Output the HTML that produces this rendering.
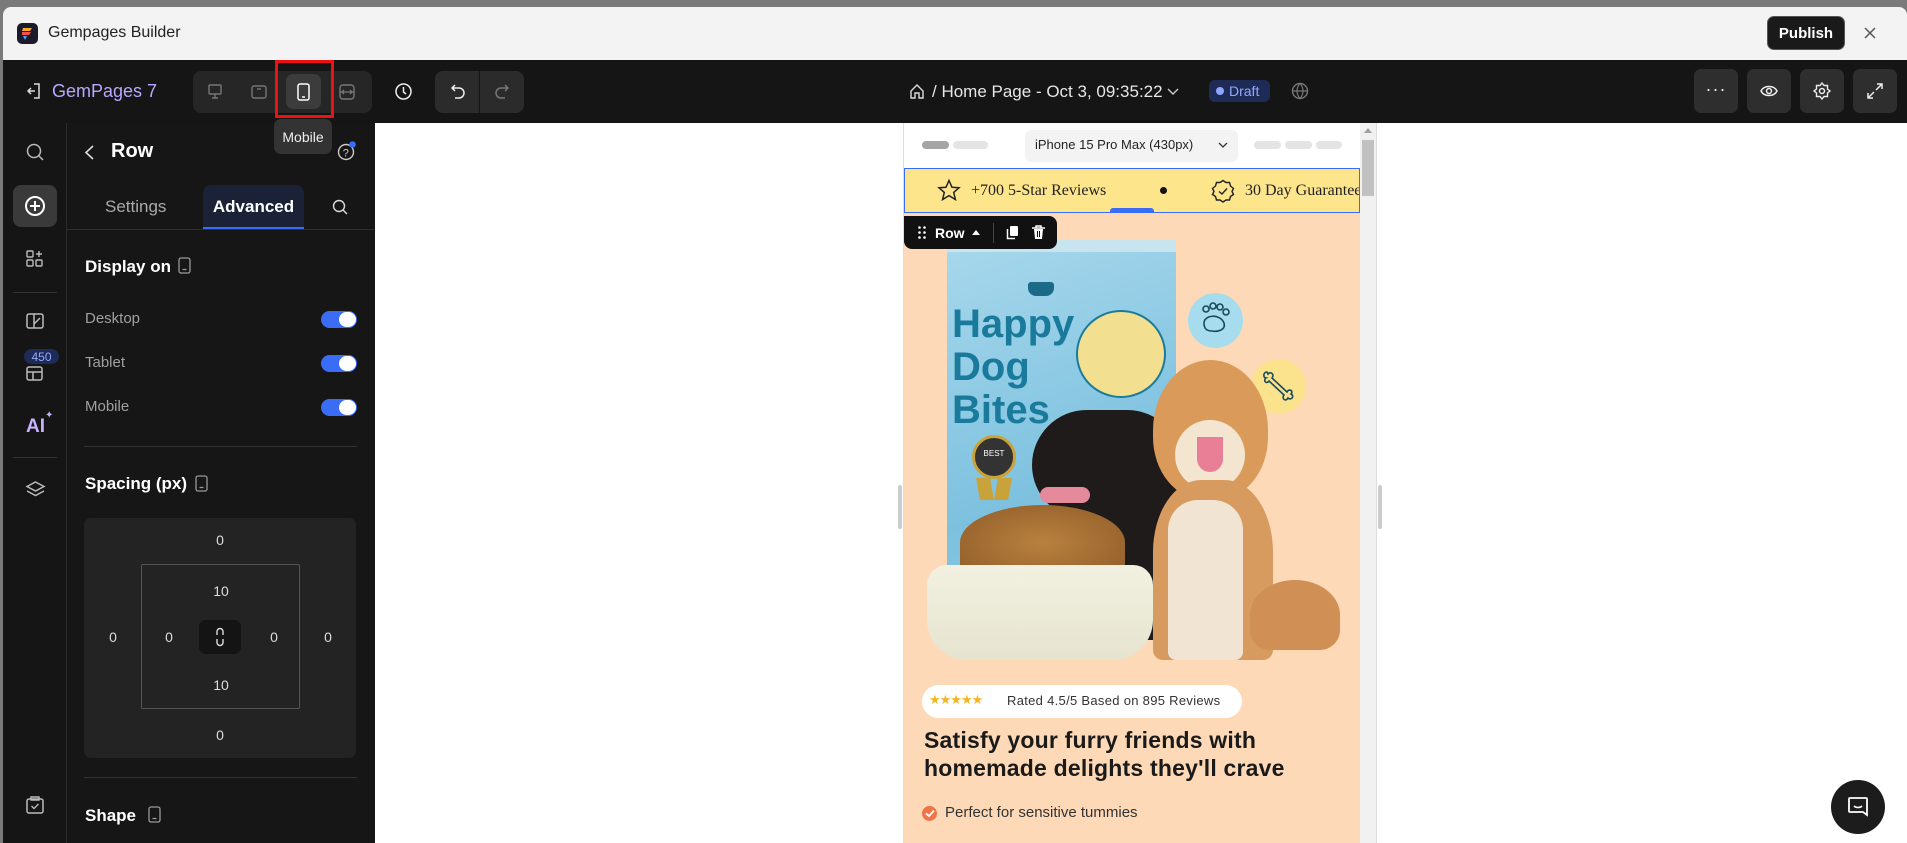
<!DOCTYPE html>
<html><head><meta charset="utf-8"><style>
*{box-sizing:border-box;margin:0;padding:0}
body{width:1907px;height:843px;overflow:hidden;background:#7a7a7a;font-family:"Liberation Sans",sans-serif;position:relative}
.a{position:absolute}
.t{position:absolute;white-space:nowrap}
svg{position:absolute;overflow:visible}
</style></head><body>
<!-- title bar -->
<div class="a" style="left:3px;top:7px;width:1904px;height:53px;background:#f3f3f3;border-radius:8px 8px 0 0"></div>
<div class="a" style="left:17px;top:23px;width:21px;height:21px;border-radius:5px;background:#1b1b2b"></div>
<svg style="left:17px;top:23px" width="21" height="21"><path d="M6 5 L15 5 L13 8 L5 8Z" fill="#f9a825"/><path d="M5 9 L14 9 L12 12 L5 12Z" fill="#ef5350"/><path d="M6 13 L10 13 L8 17Z" fill="#42a5f5"/></svg>
<div class="t" style="left:48px;top:24px;font-size:16px;color:#222">Gempages Builder</div>
<div class="a" style="left:1767px;top:16px;width:78px;height:34px;border-radius:7px;background:#1a1a1a;border:1px solid #555"></div>
<div class="t" style="left:1767px;top:25px;width:78px;text-align:center;font-size:15px;font-weight:bold;color:#fff">Publish</div>
<svg style="left:1864px;top:27px" width="12" height="12"><path d="M1 1L11 11M11 1L1 11" stroke="#555" stroke-width="1.5"/></svg>
<!-- top toolbar -->
<div class="a" style="left:3px;top:60px;width:1904px;height:63px;background:#151515"></div>
<svg style="left:27px;top:83px" width="14" height="16"><path d="M7 1H12V15H7M1 8H8M4 5L1 8L4 11" stroke="#ddd" stroke-width="1.5" fill="none"/></svg>
<div class="t" style="left:52px;top:81px;font-size:18px;color:#b9a7ff">GemPages 7</div>
<div class="a" style="left:193px;top:71px;width:179px;height:42px;border-radius:8px;background:#262626"></div>
<svg style="left:207px;top:84px" width="16" height="16"><rect x="2" y="1" width="12" height="9" rx="1" stroke="#777" fill="none" stroke-width="1.4"/><path d="M8 10V14M5 14H11" stroke="#777" stroke-width="1.4"/></svg>
<svg style="left:251px;top:84px" width="16" height="16"><rect x="1" y="2" width="14" height="12" rx="2" stroke="#777" fill="none" stroke-width="1.4"/><path d="M6 5H10" stroke="#777" stroke-width="1.4"/></svg>
<div class="a" style="left:286px;top:74px;width:35px;height:35px;border-radius:7px;background:#3c3c3c"></div>
<svg style="left:296px;top:83px" width="16" height="18"><rect x="2" y="1" width="11" height="16" rx="2" stroke="#fff" fill="none" stroke-width="1.5"/><path d="M6 14H9" stroke="#fff" stroke-width="1.5"/></svg>
<svg style="left:339px;top:84px" width="16" height="16"><rect x="1" y="1" width="14" height="14" rx="3" stroke="#777" fill="none" stroke-width="1.4"/><path d="M1 8H15M5 6L3 8L5 10M11 6L13 8L11 10" stroke="#777" fill="none" stroke-width="1.3"/></svg>
<div class="a" style="left:275px;top:60px;width:59px;height:58px;border:3px solid #ee1111"></div>
<svg style="left:395px;top:83px" width="17" height="17"><circle cx="8.5" cy="8.5" r="7.5" stroke="#eee" fill="none" stroke-width="1.5"/><path d="M8.5 4V9L11 11" stroke="#eee" fill="none" stroke-width="1.5"/></svg>
<div class="a" style="left:435px;top:71px;width:89px;height:42px;border-radius:8px;background:#2b2b2b"></div>
<div class="a" style="left:479px;top:71px;width:1px;height:42px;background:#151515"></div>
<svg style="left:450px;top:83px" width="16" height="17"><path d="M5 2L2 5L5 8M2 5H9A5 5 0 0 1 9 15H5" stroke="#eee" fill="none" stroke-width="1.5"/></svg>
<svg style="left:494px;top:83px" width="16" height="17"><path d="M11 2L14 5L11 8M14 5H7A5 5 0 0 0 7 15H11" stroke="#777" fill="none" stroke-width="1.5"/></svg>
<!-- breadcrumb -->
<svg style="left:909px;top:83px" width="16" height="17"><path d="M2 8L8 2L14 8V15H10V10H6V15H2Z" stroke="#ddd" fill="none" stroke-width="1.4"/></svg>
<div class="t" style="left:932px;top:82px;font-size:17px;color:#e6e6e6">/ Home Page - Oct 3, 09:35:22</div>
<svg style="left:1167px;top:88px" width="12" height="8"><path d="M1 1L6 6L11 1" stroke="#ccc" fill="none" stroke-width="1.4"/></svg>
<div class="a" style="left:1209px;top:80px;width:61px;height:22px;border-radius:6px;background:#1f2b57"></div>
<div class="a" style="left:1216px;top:87px;width:8px;height:8px;border-radius:50%;background:#8ea6ff"></div>
<div class="t" style="left:1229px;top:83px;font-size:14px;color:#93a9ff">Draft</div>
<svg style="left:1291px;top:82px" width="18" height="18"><circle cx="9" cy="9" r="7.5" stroke="#777" fill="none" stroke-width="1.4"/><path d="M1.5 9H16.5M9 1.5C5 6 5 12 9 16.5M9 1.5C13 6 13 12 9 16.5" stroke="#777" fill="none" stroke-width="1.2"/></svg>
<div class="a" style="left:1694px;top:69px;width:44px;height:44px;border-radius:7px;background:#2e2e2e"></div>
<div class="t" style="left:1694px;top:79px;width:44px;text-align:center;font-size:18px;color:#eee;letter-spacing:1px">···</div>
<div class="a" style="left:1747px;top:69px;width:44px;height:44px;border-radius:7px;background:#2e2e2e"></div>
<svg style="left:1760px;top:82px" width="18" height="18"><path d="M1 9C4 3 14 3 17 9C14 15 4 15 1 9Z" stroke="#eee" fill="none" stroke-width="1.5"/><circle cx="9" cy="9" r="2.5" stroke="#eee" fill="none" stroke-width="1.5"/></svg>
<div class="a" style="left:1800px;top:69px;width:44px;height:44px;border-radius:7px;background:#2e2e2e"></div>
<svg style="left:1813px;top:82px" width="18" height="18"><circle cx="9" cy="9" r="2.5" stroke="#eee" fill="none" stroke-width="1.5"/><path d="M9 1L11 3.5L14.5 3.5L14.5 7L17 9L14.5 11L14.5 14.5L11 14.5L9 17L7 14.5L3.5 14.5L3.5 11L1 9L3.5 7L3.5 3.5L7 3.5Z" stroke="#eee" fill="none" stroke-width="1.4"/></svg>
<div class="a" style="left:1853px;top:69px;width:44px;height:44px;border-radius:7px;background:#2e2e2e"></div>
<svg style="left:1867px;top:83px" width="16" height="16"><path d="M10 1H15V6M15 1L9 7M6 15H1V10M1 15L7 9" stroke="#eee" fill="none" stroke-width="1.5"/></svg>
<!-- left rail -->
<div class="a" style="left:3px;top:123px;width:64px;height:720px;background:#151515;border-right:1px solid #2a2a2a"></div>
<svg style="left:26px;top:143px" width="18" height="18"><circle cx="8" cy="8" r="6.5" stroke="#bbb" fill="none" stroke-width="1.5"/><path d="M12.5 12.5L17 17" stroke="#bbb" stroke-width="1.5"/></svg>
<div class="a" style="left:13px;top:185px;width:44px;height:42px;border-radius:8px;background:#3a3a3a"></div>
<svg style="left:24px;top:195px" width="22" height="22"><circle cx="11" cy="11" r="9" stroke="#fff" fill="none" stroke-width="2"/><path d="M11 6V16M6 11H16" stroke="#fff" stroke-width="2"/></svg>
<svg style="left:26px;top:250px" width="18" height="18"><rect x="1" y="1" width="6" height="6" rx="1" stroke="#bbb" fill="none" stroke-width="1.4"/><rect x="1" y="10" width="6" height="6" rx="1" stroke="#bbb" fill="none" stroke-width="1.4"/><rect x="10" y="10" width="6" height="6" rx="1" stroke="#bbb" fill="none" stroke-width="1.4"/><path d="M13 1V7M10 4H16" stroke="#bbb" stroke-width="1.4"/></svg>
<div class="a" style="left:13px;top:292px;width:44px;height:1px;background:#333"></div>
<svg style="left:26px;top:313px" width="19" height="17"><rect x="1" y="1" width="16" height="14" rx="2" stroke="#bbb" fill="none" stroke-width="1.5"/><path d="M8 1V15M8 11L14 5" stroke="#bbb" stroke-width="1.5"/></svg>
<div class="a" style="left:24px;top:349px;width:35px;height:15px;border-radius:8px;background:#1f2b57"></div>
<div class="t" style="left:24px;top:350px;width:35px;text-align:center;font-size:12px;color:#93a9ff">450</div>
<svg style="left:26px;top:366px" width="18" height="16"><rect x="1" y="1" width="15" height="13" rx="2" stroke="#bbb" fill="none" stroke-width="1.5"/><path d="M1 6H16M7 6V14" stroke="#bbb" stroke-width="1.5"/></svg>
<div class="t" style="left:26px;top:416px;font-size:19px;font-weight:bold;color:#c7b2ff">AI</div>
<div class="t" style="left:45px;top:410px;font-size:10px;color:#c7b2ff">✦</div>
<div class="a" style="left:13px;top:457px;width:44px;height:1px;background:#333"></div>
<svg style="left:26px;top:481px" width="19" height="17"><path d="M9.5 1L18 5.5L9.5 10L1 5.5Z M1 10L9.5 14.5L18 10" stroke="#bbb" fill="none" stroke-width="1.5"/></svg>
<svg style="left:26px;top:796px" width="18" height="18"><rect x="1" y="3" width="16" height="14" rx="2" stroke="#bbb" fill="none" stroke-width="1.5"/><path d="M5 1H13V4H5Z M5.5 10L8 12.5L12.5 8" stroke="#bbb" fill="none" stroke-width="1.4"/></svg>
<!-- panel -->
<div class="a" style="left:67px;top:123px;width:308px;height:720px;background:#161616"></div>
<svg style="left:85px;top:145px" width="9" height="15"><path d="M8 1L1 7.5L8 14" stroke="#ddd" fill="none" stroke-width="1.6"/></svg>
<div class="t" style="left:111px;top:140px;font-size:20px;font-weight:bold;color:#fff">Row</div>
<svg style="left:337px;top:141px" width="20" height="20"><circle cx="9" cy="11" r="7.5" stroke="#ccc" fill="none" stroke-width="1.4"/><text x="5.8" y="15.5" font-size="11" fill="#ccc" font-family="Liberation Sans">?</text><circle cx="15.5" cy="3.5" r="3.3" fill="#3b6cf6"/></svg>
<div class="a" style="left:203px;top:185px;width:101px;height:44px;border-radius:8px 8px 0 0;background:#1b2238;border-bottom:2px solid #3b6cf6"></div>
<div class="t" style="left:105px;top:197px;font-size:17px;color:#aaa">Settings</div>
<div class="t" style="left:203px;top:197px;width:101px;text-align:center;font-size:17px;font-weight:bold;color:#fff">Advanced</div>
<svg style="left:332px;top:199px" width="16" height="16"><circle cx="7" cy="7" r="5.5" stroke="#ddd" fill="none" stroke-width="1.4"/><path d="M11 11L15 15" stroke="#ddd" stroke-width="1.4"/></svg>
<div class="a" style="left:67px;top:229px;width:308px;height:1px;background:#2e2e2e"></div>
<div class="t" style="left:85px;top:257px;font-size:17px;font-weight:bold;color:#fff">Display on</div>
<svg style="left:178px;top:257px" width="13" height="17"><rect x="1" y="1" width="11" height="15" rx="2" stroke="#999" fill="none" stroke-width="1.3"/><path d="M4.5 12.5H8.5" stroke="#999" stroke-width="1.3"/></svg>
<div class="t" style="left:85px;top:310px;font-size:15px;color:#a0a0a0">Desktop</div>
<div class="t" style="left:85px;top:354px;font-size:15px;color:#a0a0a0">Tablet</div>
<div class="t" style="left:85px;top:398px;font-size:15px;color:#a0a0a0">Mobile</div>
<div class="a" style="left:321px;top:311px;width:36px;height:17px;border-radius:9px;background:#3b6cf6"></div><div class="a" style="left:339px;top:312px;width:17px;height:15px;border-radius:8px;background:#fff"></div>
<div class="a" style="left:321px;top:355px;width:36px;height:17px;border-radius:9px;background:#3b6cf6"></div><div class="a" style="left:339px;top:356px;width:17px;height:15px;border-radius:8px;background:#fff"></div>
<div class="a" style="left:321px;top:399px;width:36px;height:17px;border-radius:9px;background:#3b6cf6"></div><div class="a" style="left:339px;top:400px;width:17px;height:15px;border-radius:8px;background:#fff"></div>
<div class="a" style="left:84px;top:446px;width:273px;height:1px;background:#333"></div>
<div class="t" style="left:85px;top:474px;font-size:17px;font-weight:bold;color:#fff">Spacing (px)</div>
<svg style="left:195px;top:475px" width="13" height="17"><rect x="1" y="1" width="11" height="15" rx="2" stroke="#999" fill="none" stroke-width="1.3"/><path d="M4.5 12.5H8.5" stroke="#999" stroke-width="1.3"/></svg>
<div class="a" style="left:84px;top:518px;width:272px;height:240px;border-radius:7px;background:#232323"></div>
<div class="a" style="left:141px;top:564px;width:159px;height:145px;border:1px solid #555;border-radius:2px"></div>
<div class="a" style="left:199px;top:620px;width:42px;height:34px;border-radius:7px;background:#141414"></div>
<svg style="left:215px;top:628px" width="10" height="18"><path d="M2 7V3.5A3 3 0 0 1 8 3.5V7M2 11V14.5A3 3 0 0 0 8 14.5V11" stroke="#ddd" fill="none" stroke-width="1.4"/></svg>
<div style="font-size:14px;color:#ddd">
<div class="t" style="left:210px;top:532px;width:20px;text-align:center">0</div>
<div class="t" style="left:211px;top:583px;width:20px;text-align:center">10</div>
<div class="t" style="left:103px;top:629px;width:20px;text-align:center">0</div>
<div class="t" style="left:159px;top:629px;width:20px;text-align:center">0</div>
<div class="t" style="left:264px;top:629px;width:20px;text-align:center">0</div>
<div class="t" style="left:318px;top:629px;width:20px;text-align:center">0</div>
<div class="t" style="left:211px;top:677px;width:20px;text-align:center">10</div>
<div class="t" style="left:210px;top:727px;width:20px;text-align:center">0</div>
</div>
<div class="a" style="left:84px;top:777px;width:273px;height:1px;background:#333"></div>
<div class="t" style="left:85px;top:806px;font-size:17px;font-weight:bold;color:#fff">Shape</div>
<svg style="left:148px;top:806px" width="13" height="17"><rect x="1" y="1" width="11" height="15" rx="2" stroke="#999" fill="none" stroke-width="1.3"/><path d="M4.5 12.5H8.5" stroke="#999" stroke-width="1.3"/></svg>
<!-- canvas -->
<div class="a" style="left:375px;top:123px;width:1532px;height:720px;background:#fff"></div>
<div class="a" style="left:898px;top:485px;width:4px;height:44px;border-radius:2px;background:#ccc"></div>
<div class="a" style="left:1378px;top:485px;width:4px;height:44px;border-radius:2px;background:#ccc"></div>
<div class="a" style="left:903px;top:123px;width:474px;height:720px;border-left:1px solid #ddd;border-right:1px solid #ddd;background:#fff"></div>
<div class="a" style="left:1360px;top:123px;width:16px;height:720px;background:#f1f1f1"></div>
<div class="a" style="left:1362px;top:140px;width:12px;height:56px;background:#c1c1c1"></div>
<svg style="left:1364px;top:128px" width="8" height="5"><path d="M0 5L4 0L8 5Z" fill="#a0a0a0"/></svg>
<div class="a" style="left:922px;top:141px;width:27px;height:8px;border-radius:4px;background:#a5a5a5"></div>
<div class="a" style="left:953px;top:141px;width:35px;height:8px;border-radius:4px;background:#e4e4e4"></div>
<div class="a" style="left:1025px;top:130px;width:213px;height:32px;border-radius:6px;background:#f3f3f3"></div>
<div class="t" style="left:1035px;top:137px;font-size:13px;color:#222">iPhone 15 Pro Max (430px)</div>
<svg style="left:1218px;top:142px" width="10" height="6"><path d="M1 1L5 5L9 1" stroke="#333" fill="none" stroke-width="1.3"/></svg>
<div class="a" style="left:1254px;top:141px;width:27px;height:8px;border-radius:4px;background:#e4e4e4"></div>
<div class="a" style="left:1285px;top:141px;width:27px;height:8px;border-radius:4px;background:#e4e4e4"></div>
<div class="a" style="left:1316px;top:141px;width:26px;height:8px;border-radius:4px;background:#e4e4e4"></div>
<!-- banner -->
<div class="a" style="left:904px;top:168px;width:456px;height:45px;background:#fde58b;border:1px solid #3b6cf6;overflow:hidden">
<svg style="left:32px;top:10px" width="24" height="22"><path d="M12 1.5L15 8.3L22 8.8L16.7 13.4L18.4 20.5L12 16.6L5.6 20.5L7.3 13.4L2 8.8L9 8.3Z" stroke="#222" fill="none" stroke-width="1.5"/></svg>
<div class="t" style="left:66px;top:13px;font-family:'Liberation Serif',serif;font-size:16px;color:#222">+700 5-Star Reviews</div>
<div class="a" style="left:255px;top:18px;width:7px;height:7px;border-radius:50%;background:#111"></div>
<svg style="left:306px;top:10px" width="24" height="24"><path d="M12 1.5L15 3.5L18.5 3.5L19.5 7L22.5 9.5L21 12.5L22.5 15.5L19.5 17.5L18.5 21L15 21L12 23L9 21L5.5 21L4.5 17.5L1.5 15.5L3 12.5L1.5 9.5L4.5 7L5.5 3.5L9 3.5Z" stroke="#222" fill="none" stroke-width="1.4"/><path d="M8 12.5L11 15L16 9.5" stroke="#222" fill="none" stroke-width="1.4"/></svg>
<div class="t" style="left:340px;top:13px;font-family:'Liberation Serif',serif;font-size:16px;color:#222">30 Day Guarantee</div>
</div>
<div class="a" style="left:1110px;top:208px;width:44px;height:5px;border-radius:3px 3px 0 0;background:#3b6cf6"></div>
<!-- hero -->
<div class="a" style="left:904px;top:213px;width:456px;height:630px;background:#fed9b7"></div>
<div class="a" style="left:947px;top:240px;width:229px;height:400px;border-radius:4px 4px 0 0;background:linear-gradient(160deg,#a8d8ec,#7dc1df 60%,#8ccbe4)"></div>
<div class="a" style="left:947px;top:240px;width:229px;height:12px;background:#c7e4ef"></div>
<div class="a" style="left:1028px;top:282px;width:26px;height:14px;border-radius:3px 3px 8px 8px;background:#1b6b88"></div>
<div class="t" style="left:952px;top:303px;font-size:40px;font-weight:bold;color:#1a7a9c;line-height:43px">Happy<br>Dog<br>Bites</div>
<div class="a" style="left:1076px;top:310px;width:90px;height:88px;border-radius:50%;background:#f2df8f;border:2px solid #1a7a9c"></div>
<div class="a" style="left:972px;top:435px;width:44px;height:44px;border-radius:50%;background:#333;border:3px solid #c9a23a"></div>
<div class="t" style="left:972px;top:449px;width:44px;text-align:center;font-size:8px;color:#fff">BEST</div>
<div class="a" style="left:978px;top:478px;width:14px;height:22px;background:#c9a23a;transform:skewX(10deg)"></div>
<div class="a" style="left:996px;top:478px;width:14px;height:22px;background:#c9a23a;transform:skewX(-10deg)"></div>
<div class="a" style="left:1188px;top:293px;width:55px;height:55px;border-radius:50%;background:#a7dcef"></div>
<svg style="left:1200px;top:303px" width="32" height="34"><circle cx="6" cy="6" r="3" stroke="#1a4a5a" fill="none" stroke-width="1.6"/><circle cx="13" cy="3" r="3" stroke="#1a4a5a" fill="none" stroke-width="1.6"/><circle cx="20" cy="4" r="3" stroke="#1a4a5a" fill="none" stroke-width="1.6"/><circle cx="26" cy="9" r="3" stroke="#1a4a5a" fill="none" stroke-width="1.6"/><path d="M4 20C4 12 20 10 24 20C26 27 18 29 12 28C6 28 4 25 4 20Z" stroke="#1a4a5a" fill="none" stroke-width="1.6"/></svg>
<div class="a" style="left:1251px;top:359px;width:55px;height:55px;border-radius:50%;background:#fbe38e"></div>
<svg style="left:1260px;top:368px" width="36" height="36"><path d="M7 4C3 4 3 10 6 10C3 12 6 17 9 13L24 27C21 31 26 34 28 30C31 33 35 28 31 26C34 23 29 20 27 24L12 10C15 6 10 3 8 6Z" stroke="#1a4a5a" fill="none" stroke-width="1.6"/></svg>
<div class="a" style="left:1032px;top:410px;width:150px;height:110px;border-radius:60px 60px 20px 60px;background:#1e1b1a"></div>
<div class="a" style="left:1100px;top:480px;width:80px;height:160px;background:#1e1b1a"></div>
<div class="a" style="left:1040px;top:487px;width:50px;height:16px;border-radius:8px;background:#e48a9a"></div>
<div class="a" style="left:1153px;top:360px;width:115px;height:140px;border-radius:50% 50% 45% 45%;background:#d99a5a"></div>
<div class="a" style="left:1175px;top:420px;width:70px;height:70px;border-radius:50%;background:#f3e5d0"></div>
<div class="a" style="left:1197px;top:437px;width:26px;height:35px;border-radius:0 0 13px 13px;background:#e87f97"></div>
<div class="a" style="left:1153px;top:480px;width:120px;height:180px;border-radius:40% 40% 10px 10px;background:#d79b5f"></div>
<div class="a" style="left:1168px;top:500px;width:75px;height:160px;border-radius:30px 30px 8px 8px;background:#f1e4d3"></div>
<div class="a" style="left:1250px;top:580px;width:90px;height:70px;border-radius:50% 50% 20px 20px;background:#d08f55"></div>
<div class="a" style="left:960px;top:505px;width:165px;height:75px;border-radius:50% 50% 10px 10px;background:radial-gradient(#b9813f,#8f5c28)"></div>
<div class="a" style="left:927px;top:565px;width:226px;height:95px;border-radius:20px 20px 40px 40px;background:linear-gradient(#f2f1e1,#e6e4cf)"></div>
<!-- rating -->
<div class="a" style="left:922px;top:685px;width:320px;height:33px;border-radius:17px;background:#fff"></div>
<div class="t" style="left:929px;top:692px;font-size:13px;color:#f5b51b;letter-spacing:-1px">★★★★★</div>
<div class="t" style="left:1007px;top:693px;font-size:13px;color:#333;letter-spacing:0.3px">Rated 4.5/5 Based on 895 Reviews</div>
<div class="t" style="left:924px;top:726px;font-size:23px;font-weight:bold;color:#1a1a1a;line-height:28px;letter-spacing:0.2px">Satisfy your furry friends with<br>homemade delights they'll crave</div>
<div class="a" style="left:922px;top:806px;width:15px;height:15px;border-radius:50%;background:#ef7548"></div>
<svg style="left:925px;top:809px" width="10" height="9"><path d="M1 4.5L4 7L9 1.5" stroke="#fff" fill="none" stroke-width="1.8"/></svg>
<div class="t" style="left:945px;top:804px;font-size:15px;color:#333">Perfect for sensitive tummies</div>
<!-- chat -->
<div class="a" style="left:1831px;top:780px;width:54px;height:54px;border-radius:50%;background:#1c1c1c"></div>
<svg style="left:1847px;top:796px" width="22" height="22"><path d="M3 2H19A1 1 0 0 1 20 3V19L16 16H3A1 1 0 0 1 2 15V3A1 1 0 0 1 3 2Z" stroke="#fff" fill="none" stroke-width="1.8"/><path d="M7 10C9 12 13 12 15 10" stroke="#fff" fill="none" stroke-width="1.6"/></svg>
<!-- row toolbar -->
<div class="a" style="left:904px;top:216px;width:153px;height:33px;border-radius:0 8px 8px 8px;background:#111"></div>
<svg style="left:918px;top:226px" width="8" height="13"><g fill="#fff"><circle cx="1.5" cy="1.5" r="1.3"/><circle cx="6.5" cy="1.5" r="1.3"/><circle cx="1.5" cy="6.5" r="1.3"/><circle cx="6.5" cy="6.5" r="1.3"/><circle cx="1.5" cy="11.5" r="1.3"/><circle cx="6.5" cy="11.5" r="1.3"/></g></svg>
<div class="t" style="left:935px;top:225px;font-size:14px;font-weight:bold;color:#fff">Row</div>
<svg style="left:972px;top:230px" width="8" height="5"><path d="M0 5L4 0L8 5Z" fill="#fff"/></svg>
<div class="a" style="left:993px;top:223px;width:1px;height:20px;background:#444"></div>
<svg style="left:1006px;top:225px" width="13" height="15"><rect x="4" y="1" width="8" height="10" rx="1" fill="#fff"/><path d="M1.5 4V13.5H9" stroke="#fff" fill="none" stroke-width="1.5"/></svg>
<svg style="left:1032px;top:225px" width="13" height="15"><path d="M0 3H13M4 3V1H9V3" stroke="#fff" stroke-width="1.5" fill="none"/><path d="M2 4H11L10 14H3Z" fill="#fff"/><path d="M5.5 6V12M7.5 6V12" stroke="#111" stroke-width="1"/></svg>
<!-- tooltip -->
<div class="a" style="left:274px;top:119px;width:58px;height:35px;border-radius:7px;background:#333"></div>
<div class="t" style="left:274px;top:129px;width:58px;text-align:center;font-size:14px;color:#eee">Mobile</div>
</body></html>
